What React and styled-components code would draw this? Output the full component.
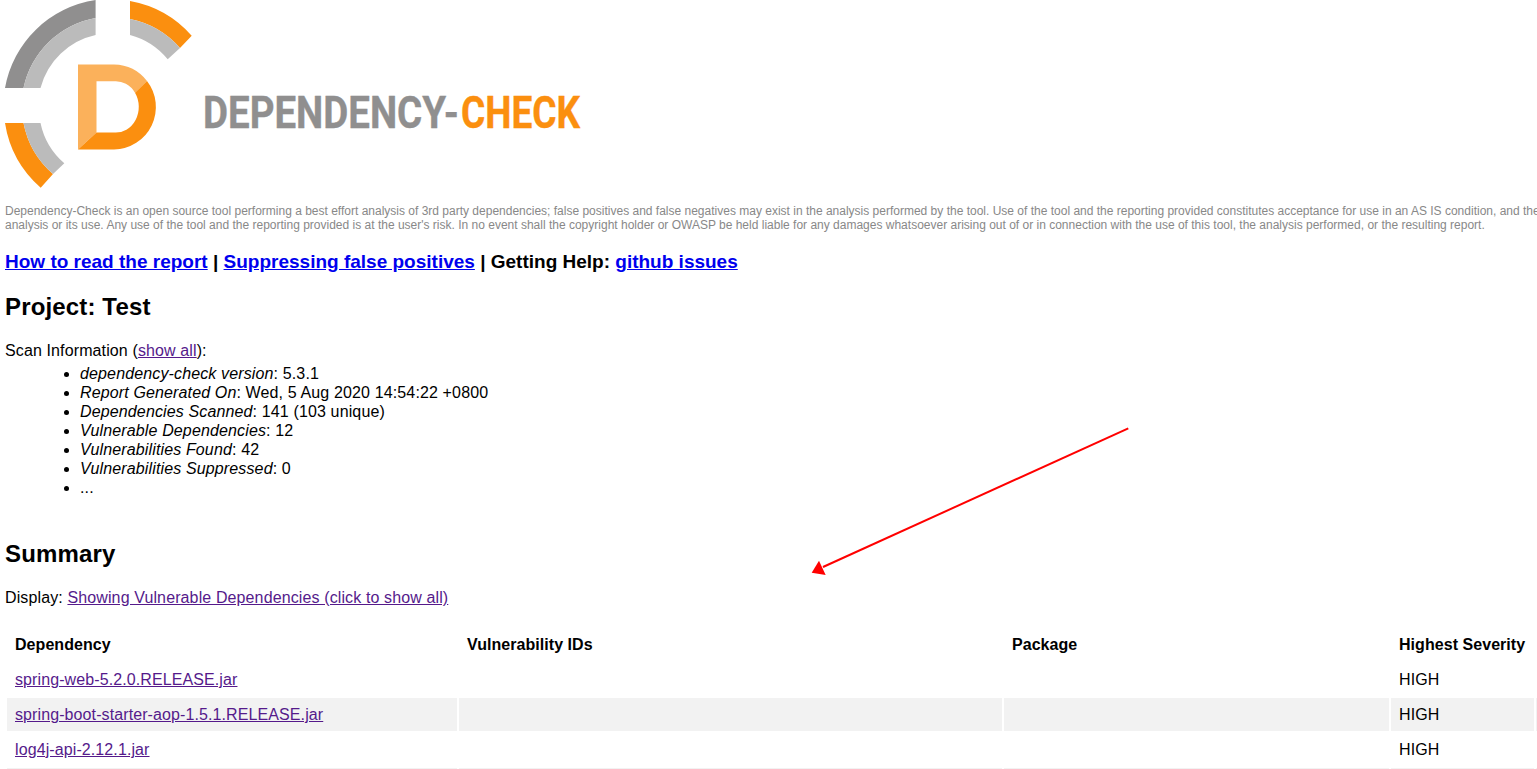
import styled, { createGlobalStyle } from "styled-components";

const GlobalStyle = createGlobalStyle`
    html, body {
        margin: 0;
        background: #fff;
        overflow: hidden;
    }
    body {
        font-family: "Liberation Sans", Arial, sans-serif;
        font-size: 16px;
        color: #000;
    }
`

const Page = styled.div`
    position: relative;
    width: 1537px;
    height: 769px;
    padding: 0 0 0 5px;
    box-sizing: border-box;
    overflow: hidden;
`
const LogoSvg = styled.svg`
    display: block;
    margin-left: -5px;
    width: 600px;
    height: 204px;
`
const Wordmark = styled.text`
    font-family: Roboto, sans-serif;
    font-weight: 700;
    font-size: 43.5px;
    fill: ${props => props.$color};
    stroke: ${props => props.$color};
    stroke-width: 0.4px;
`
const Notice = styled.p`
    margin: 0;
    font-size: 12px;
    line-height: 14px;
    color: #888;
    white-space: nowrap;
`
const HelpLinks = styled.h2`
    margin: 18px 0 0;
    font-size: 19px;
    line-height: 23px;
    font-weight: bold;
    white-space: nowrap;
`
const Heading = styled.h2`
    margin: ${props => props.$top} 0 0;
    font-size: 24px;
    line-height: 27px;
    font-weight: bold;
    letter-spacing: 0.15px;
`
const Line = styled.div`
    margin-top: ${props => props.$top};
    line-height: 19px;
    letter-spacing: 0.12px;
`
const Link = styled.a`
    color: ${props => props.$fresh ? "#0000ee" : "#551a8b"};
    text-decoration: underline;
    cursor: pointer;
`
const InfoList = styled.ul`
    margin: 4px 0 0;
    padding: 0 0 0 75px;
    list-style: disc;
    line-height: 19px;
    letter-spacing: 0.135px;
`
const Table = styled.table`
    margin-top: 19px;
    border-collapse: separate;
    border-spacing: 2px;
    table-layout: fixed;
    width: 1700px;
    font-size: 16px;
`
const HeadCell = styled.th`
    padding: 8px;
    line-height: 17px;
    text-align: left;
    font-weight: bold;
    white-space: nowrap;
    letter-spacing: 0.05px;
`
const Cell = styled.td`
    padding: 8px;
    height: 17px;
    line-height: 17px;
    white-space: nowrap;
    letter-spacing: 0.1px;
`
const Row = styled.tr`
    background: ${props => props.$striped ? "#f2f2f2" : "#fff"};
`
const Overlay = styled.svg`
    position: absolute;
    left: 0;
    top: 0;
    width: 1537px;
    height: 769px;
    pointer-events: none;
`

const info = [
    ["dependency-check version", "5.3.1"],
    ["Report Generated On", "Wed, 5 Aug 2020 14:54:22 +0800"],
    ["Dependencies Scanned", "141 (103 unique)"],
    ["Vulnerable Dependencies", "12"],
    ["Vulnerabilities Found", "42"],
    ["Vulnerabilities Suppressed", "0"],
]

const rows = [
    "spring-web-5.2.0.RELEASE.jar",
    "spring-boot-starter-aop-1.5.1.RELEASE.jar",
    "log4j-api-2.12.1.jar",
    "spring-core-5.2.0.RELEASE.jar",
]

function Logo() {
    return (
        <LogoSvg viewBox="0 0 600 204">
            <path fill="#908f8f" d="M95.6 0A108 108 0 0 0 5 88H23.5A90 90 0 0 1 95.6 18Z" />
            <path fill="#bbbbbb" d="M95.6 18A90 90 0 0 0 23.5 88H40.5A73 73 0 0 1 95.6 35Z" />
            <path fill="#fb8f0f" d="M130 1A108 108 0 0 1 191.7 35.7L180 48A90 90 0 0 0 130 19Z" />
            <path fill="#bbbbbb" d="M130 19A90 90 0 0 1 180 48L167.7 59.3A73 73 0 0 0 130 35Z" />
            <path fill="#fb8f0f" d="M5 123A108 108 0 0 0 40.7 187.7L53 174A90 90 0 0 1 23.5 123Z" />
            <path fill="#bbbbbb" d="M23.5 123A90 90 0 0 0 53 174L64.3 163.3A73 73 0 0 1 40.5 123Z" />
            <path fill="#fbb15b" d="M78 64.5H114A42.5 42.5 0 0 1 147 81L135 92.7A23 25.75 0 0 0 114 81.25H96.5V132.5L78 149.5Z" />
            <path fill="#fb8f0f" d="M147 81A42.5 42.5 0 0 1 114 149.5H78L96.5 132.5H114A23 25.75 0 0 0 135 92.7Z" />
            <Wordmark x="203" y="128" textLength="256" lengthAdjust="spacingAndGlyphs" $color="#908f8f">DEPENDENCY-</Wordmark>
            <Wordmark x="461" y="128" textLength="119" lengthAdjust="spacingAndGlyphs" $color="#fb8f0f">CHECK</Wordmark>
        </LogoSvg>
    )
}

export default function App() {
    return (
        <Page>
            <GlobalStyle />
            <Logo />
            <Notice>
                Dependency-Check is an open source tool performing a best effort analysis of 3rd party dependencies; false positives and false negatives may exist in the analysis performed by the tool. Use of the tool and the reporting provided constitutes acceptance for use in an AS IS condition, and there are NO warranties, implied or otherwise, with regard to the<br />
                analysis or its use. Any use of the tool and the reporting provided is at the user's risk. In no event shall the copyright holder or OWASP be held liable for any damages whatsoever arising out of or in connection with the use of this tool, the analysis performed, or the resulting report.
            </Notice>
            <HelpLinks>
                <Link $fresh>How to read the report</Link> | <Link $fresh>Suppressing false positives</Link> | Getting Help: <Link $fresh>github issues</Link>
            </HelpLinks>
            <Heading $top="20px">Project: Test</Heading>
            <Line $top="21px">Scan Information (<Link>show all</Link>):</Line>
            <InfoList>
                {info.map(([label, value]) => (
                    <li key={label}><em>{label}</em>: {value}</li>
                ))}
                <li>...</li>
            </InfoList>
            <Heading $top="43px">Summary</Heading>
            <Line $top="21px">Display: <Link>Showing Vulnerable Dependencies (click to show all)</Link></Line>
            <Table>
                <colgroup>
                    <col style={{ width: 450 }} />
                    <col style={{ width: 543 }} />
                    <col style={{ width: 385 }} />
                    <col style={{ width: 143 }} />
                    <col />
                </colgroup>
                <thead>
                    <tr>
                        <HeadCell>Dependency</HeadCell>
                        <HeadCell>Vulnerability IDs</HeadCell>
                        <HeadCell>Package</HeadCell>
                        <HeadCell>Highest Severity</HeadCell>
                        <HeadCell>CVE Count</HeadCell>
                    </tr>
                </thead>
                <tbody>
                    {rows.map((name, i) => (
                        <Row key={name} $striped={i % 2 === 1}>
                            <Cell><Link>{name}</Link></Cell>
                            <Cell />
                            <Cell />
                            <Cell>HIGH</Cell>
                            <Cell />
                        </Row>
                    ))}
                </tbody>
            </Table>
            <Overlay viewBox="0 0 1537 769">
                <line x1="1128.3" y1="428.3" x2="823" y2="567" stroke="#ff0000" strokeWidth="2" />
                <polygon points="811.7,572.7 819,560.7 825.7,575" fill="#ff0000" />
            </Overlay>
        </Page>
    )
}
